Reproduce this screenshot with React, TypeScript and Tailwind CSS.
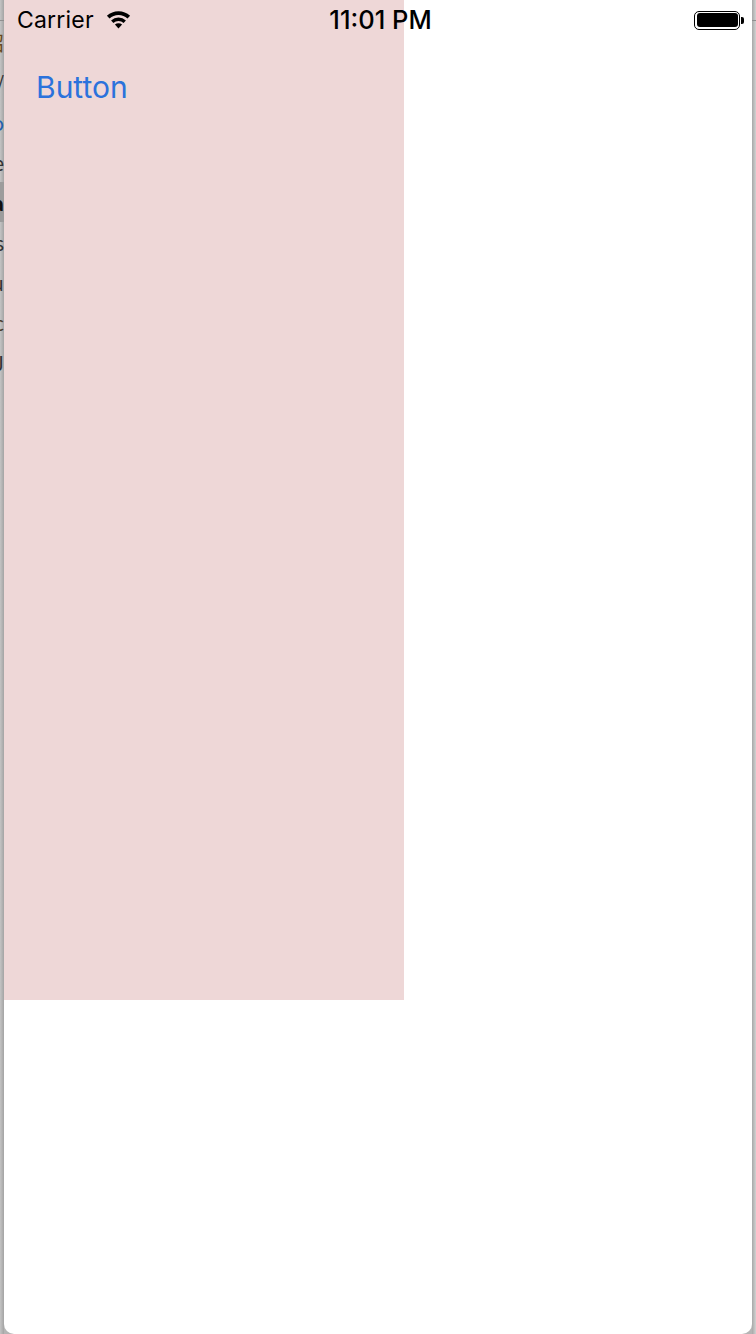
const rows = [
  { t: "招", c: "text-[#6b4a1e]" },
  { t: "/", c: "text-[#333333]" },
  { t: "o", c: "text-[#1f5fb0]" },
  { t: "e", c: "text-[#333333]" },
  { t: "a", c: "text-[#111111] font-bold bg-[#9c9c9c]" },
  { t: "s", c: "text-[#333333]" },
  { t: "u", c: "text-[#333333]" },
  { t: "c", c: "text-[#4a3a2a]" },
  { t: "J", c: "text-[#333333]" },
];

export default function App() {
  return (
    <div className="w-[756px] h-[1334px] flex overflow-hidden bg-[#b5b5b5] font-['Inter','Liberation_Sans',sans-serif]">
      <div className="w-1 shrink-0 flex flex-col overflow-hidden bg-gradient-to-r from-[#c4c4c4] to-[#a4a4a4]">
        <div className="h-[21px] shrink-0 border-b border-[#8f8f8f] mb-px" />
        {rows.map((r, i) => (
          <div key={i} className={`h-10 w-1 overflow-hidden flex items-center justify-end text-[20px] leading-none pt-0.5 ${r.c}`}>
            <span className="shrink-0 font-['Noto_Sans_CJK_SC','Liberation_Sans',sans-serif]">{r.t}</span>
          </div>
        ))}
      </div>
      <div className="relative flex-1 h-full bg-white rounded-b-[10px] overflow-hidden">
        <div className="w-[400px] h-[1000px] bg-[#eed7d7] pt-[68px] pl-8">
          <div className="text-[#2b72dc] text-[30px] leading-[38px] font-normal">Button</div>
        </div>
        <div className="absolute inset-x-0 top-0 h-10 flex items-center justify-between pl-[13px] pr-[8px] text-black">
          <div className="flex items-center gap-[11px] w-[288px]">
            <span className="text-[23px] leading-none tracking-[0.2px]">Carrier</span>
            <svg width="27" height="20" viewBox="0 0 26 20" fill="currentColor">
              <path d="M13 18.5 9.4 14.6a5.2 5.2 0 0 1 7.2 0Z" />
              <path d="M7.9 12.9 5.6 10.4a10.9 10.9 0 0 1 14.8 0l-2.3 2.5a7.5 7.5 0 0 0-10.2 0Z" />
              <path d="M4 8.6 1.4 5.8a17 17 0 0 1 23.2 0L22 8.6a13.2 13.2 0 0 0-18 0Z" />
            </svg>
          </div>
          <span className="text-[25.5px] leading-none font-medium">11:01 PM</span>
          <div className="w-[288px] flex justify-end items-center">
            <div className="w-[46px] h-[19px] rounded-[5px] border border-black p-[1.5px]">
              <div className="w-full h-full rounded-[3px] bg-black" />
            </div>
            <div className="w-[3px] h-[7px] rounded-r-[2px] bg-black ml-px" />
          </div>
        </div>
      </div>
      <div className="w-1 shrink-0 flex flex-col bg-gradient-to-r from-[#a8a8a8] to-[#d2d2d2]">
        <div className="h-[21px] shrink-0 border-b border-[#8f8f8f]" />
      </div>
    </div>
  );
}
